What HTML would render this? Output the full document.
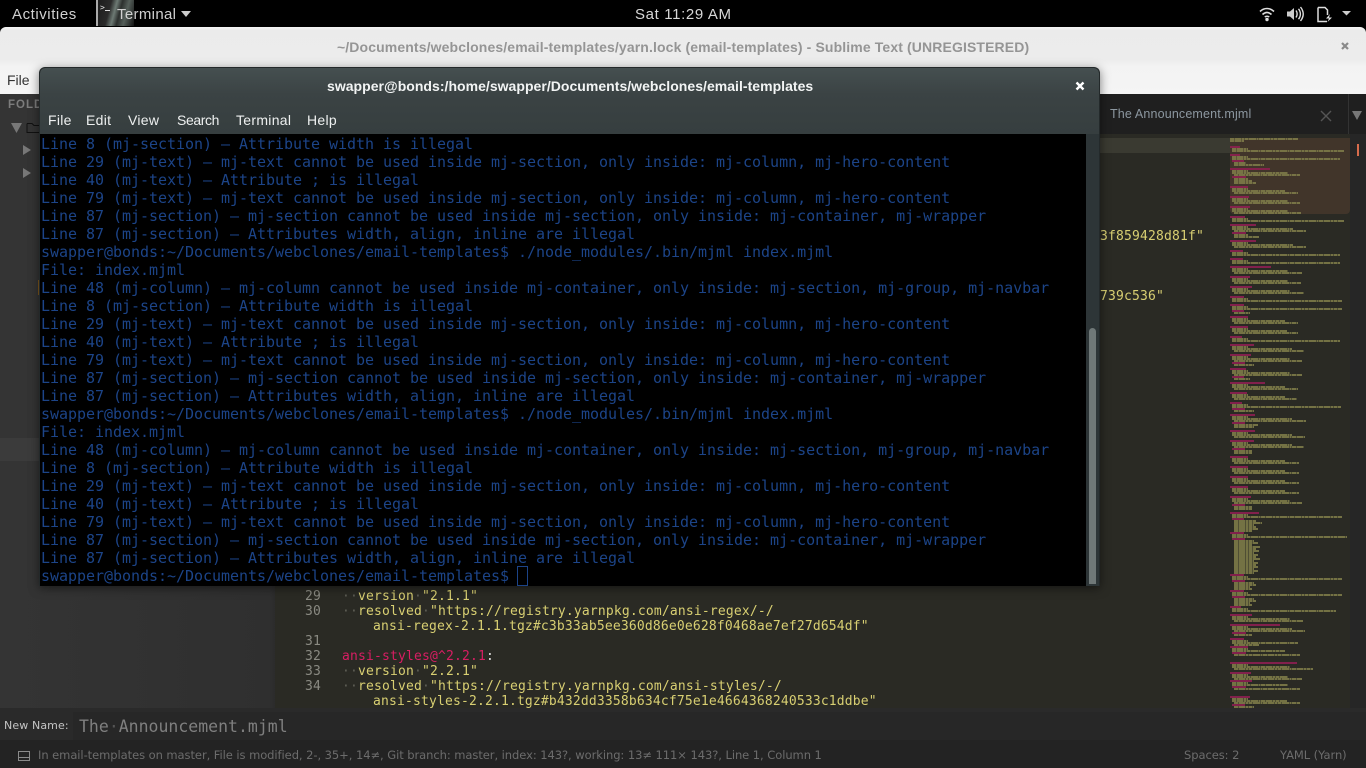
<!DOCTYPE html>
<html><head><meta charset="utf-8"><style>
*{box-sizing:border-box;margin:0;padding:0}
html,body{width:1366px;height:768px;overflow:hidden;background:#000;font-family:"Liberation Sans",sans-serif}
.a{position:absolute;white-space:pre}
.ed{font-family:"DejaVu Sans Mono",monospace;font-size:13px;letter-spacing:.17px;line-height:15px;color:#d8cf72}
.n{color:#8a8a82;width:30px;text-align:right;left:291px}
.d{color:#5f5f56}
.st{font-family:"DejaVu Sans",sans-serif;font-size:11.5px;color:#6c6c6c;letter-spacing:-.06px;line-height:16px}
.m{color:#eef0f0;font-size:14px;letter-spacing:.3px;top:112px;line-height:16px}
pre{font-family:"DejaVu Sans Mono",monospace;font-size:15px;letter-spacing:-.03px;line-height:18px;color:#1c4488}
</style></head><body>
<div class="a" style="left:0;top:0;width:1366px;height:27px;background:#000"></div>
<div class="a" style="left:12px;top:7px;color:#d0d0d0;font-size:15px;letter-spacing:.56px;line-height:16px">Activities</div>
<div class="a" style="left:96px;top:0;width:38px;height:26px;background:linear-gradient(105deg,#1a1a1a 0,#2a2a2a 35%,#6d7a74 48%,#2c302e 60%,#555f5a 75%,#111 100%)"></div>
<div class="a" style="left:96px;top:0;width:2px;height:26px;background:#aaa"></div>
<div class="a" style="left:100px;top:3px;color:#ddd;font:8px 'DejaVu Sans Mono',monospace">&gt;</div>
<div class="a" style="left:105px;top:10px;width:5px;height:1px;background:#ddd"></div>
<div class="a" style="left:117px;top:7px;color:#d0d0d0;font-size:15px;letter-spacing:.33px;line-height:16px">Terminal</div>
<svg class="a" style="left:181px;top:11px" width="10" height="6"><path d="M0 0H10L5 6Z" fill="#ccc"/></svg>
<div class="a" style="left:635px;top:7px;color:#d8d8d8;font-size:15px;letter-spacing:.64px;line-height:16px">Sat 11:29 AM</div>
<svg class="a" style="left:1258px;top:5px" width="96" height="18" fill="none">
<path d="M2 6.5C6 2.5 12 2.5 16 6.5M4.5 9.5C7.5 6.8 10.5 6.8 13.5 9.5M6.8 12C8 11 10 11 11.2 12" stroke="#ddd" stroke-width="1.6"/><circle cx="9" cy="14.5" r="1.7" fill="#ddd"/>
<path d="M29 6.5H32L36 3V15L32 11.5H29Z" fill="#ccc"/><path d="M38 5.5C39.5 7.5 39.5 10.5 38 12.5M40.5 3.8C43 7 43 11 40.5 14.2M42.5 2C46 6.5 46 11.5 42.5 16" stroke="#ddd" stroke-width="1.4"/>
<path d="M60 2.5H67L69.5 5V10M69 16.5H60V2.5" stroke="#ddd" stroke-width="1.5"/><path d="M72 9L68 13.5H71L69.5 17L74 12.5H71Z" fill="#ddd"/>
<path d="M84 6H93L88.5 10.5Z" fill="#ccc"/></svg>

<div class="a" style="left:0;top:27px;width:1366px;height:741px;background:#2a2a24;border-radius:6px 6px 0 0;overflow:hidden">
<div class="a" style="left:0;top:0;width:1366px;height:67px;background:linear-gradient(#f6f6f6 0,#ebebeb 3px,#ececec 33px,#f3f3f3 40px,#f5f5f5 100%)"></div>
</div>
<div class="a" style="left:337px;top:39px;color:#8c8c8c;font-size:14px;letter-spacing:.12px;line-height:16px;font-weight:700;opacity:.9">~/Documents/webclones/email-templates/yarn.lock (email-templates) - Sublime Text (UNREGISTERED)</div>
<svg class="a" style="left:1341px;top:42px" width="8" height="8"><path d="M1 1L7 7M7 1L1 7" stroke="#8a8a8a" stroke-width="2.2"/></svg>
<div class="a" style="left:7px;top:72px;color:#333;font-size:14px;line-height:16px">File</div>

<div class="a" style="left:0;top:94px;width:275px;height:614px;background:linear-gradient(90deg,#343434,#2f2f2f 270px,#2b2b2b)"></div>
<div class="a" style="left:0;top:438px;width:275px;height:23px;background:#3b3b3b"></div>
<div class="a" style="left:8px;top:97px;color:#7c7c7c;font-size:11.5px;font-weight:700;letter-spacing:1px;line-height:16px">FOLDERS</div>
<svg class="a" style="left:8px;top:118px" width="32" height="62"><path d="M3 5H14L8.5 15Z" fill="#777"/><path d="M19 5.500H24L26 7.500H32M19 5.500V14.500H32" stroke="#111" fill="none"/><path d="M15 27L23 32L15 37Z" fill="#777"/><path d="M15 50L23 55L15 60Z" fill="#777"/></svg>
<div class="a" style="left:38px;top:280px;width:1px;height:15px;background:#80581e"></div>

<div class="a" style="left:275px;top:94px;width:1091px;height:40px;background:#1f1f1f"></div>
<div class="a" style="left:1110px;top:106px;color:#8c97a0;font-size:12.500px;letter-spacing:.15px;line-height:16px">The Announcement.mjml</div>
<svg class="a" style="left:1320px;top:110px" width="12" height="12"><path d="M1 1L11 11M11 1L1 11" stroke="#555" stroke-width="1.400"/></svg>
<div class="a" style="left:1348px;top:94px;width:1px;height:44px;background:#333"></div>
<svg class="a" style="left:1352px;top:111px" width="10" height="9"><path d="M0 0H10L5 9Z" fill="#777"/></svg>
<div class="a" style="left:275px;top:134px;width:1091px;height:574px;background:#2a2a24"></div>
<div class="a" style="left:275px;top:138px;width:955px;height:15px;background:#3a3a31"></div>
<div class="a" style="left:1350px;top:134px;width:16px;height:574px;background:#262626"></div>
<div class="a" style="left:1357px;top:144px;width:2px;height:12px;background:#d86c4c"></div>
<div class="a" style="left:1230px;top:138px;width:120px;height:76px;background:#41352a;border-radius:0 0 4px 4px"></div>

<svg class="a" style="left:0;top:0" width="1366" height="768" fill="none">
<path stroke="#7f7c49" stroke-width="1.800" stroke-dasharray="4 .5 7 .5 2 .5" d="M1230 139H1298M1230 141H1244M1232 149h16M1232 151H1344M1232 157h16M1232 159H1340M1234 163h12M1234 165h30M1232 171h16M1232 173H1288M1234 175H1300M1234 179h14M1234 181h18M1234 183h22M1232 189h16M1232 191H1285M1234 193H1298M1232 199h16M1232 201H1288M1234 203H1300M1232 209h16M1232 211H1288M1234 213H1301M1232 219h16M1232 221H1344M1232 227h16M1232 229H1293M1234 231H1306M1234 235h14M1234 237h25M1232 243h16M1232 245H1293M1234 247H1306M1232 253h16M1232 255H1340M1232 261h16M1232 263H1340M1232 269h16M1232 271H1288M1234 273H1302M1232 279h16M1232 281H1288M1234 283H1301M1232 289h16M1232 291H1290M1234 293H1304M1232 299h16M1232 301H1342M1232 307h16M1232 309H1342M1234 313h16M1232 319h16M1232 321H1285M1234 323H1298M1232 329h16M1232 331H1287M1234 333H1298M1232 339h16M1232 341H1340M1232 347h16M1232 349H1292M1234 351H1304M1232 357h16M1232 359H1290M1234 361H1302M1234 365h20M1232 371h16M1232 373H1290M1234 375H1302M1234 379h16M1232 385h16M1232 387H1285M1234 389H1298M1232 395h16M1232 397H1285M1234 399H1297M1232 405h16M1232 407H1341M1234 411h20M1232 417h16M1232 419H1292M1234 421H1306M1234 425h24M1234 427h20M1232 433h16M1232 435H1292M1234 437H1305M1232 443h16M1232 445H1292M1234 447H1304M1234 451h18M1234 453h18M1232 459h16M1232 461H1285M1234 463H1299M1232 469h16M1232 471H1285M1234 473H1299M1232 479h16M1232 481H1285M1234 483H1299M1232 489h16M1232 491H1285M1234 493H1299M1232 499h16M1232 501H1290M1234 503H1302M1234 507h18M1234 509h18M1232 515h16M1232 517H1342M1234 521h22M1234 523h28M1234 525h20M1234 527h22M1234 529h24M1234 531h18M1232 535h16M1232 537H1347M1234 541h20M1234 543h24M1234 545h18M1234 547h26M1234 549h22M1234 551h25M1234 553h20M1234 555h24M1234 557h22M1234 559h26M1234 561h20M1234 563h24M1234 565h22M1234 567h24M1234 569h20M1234 571h24M1234 573h20M1232 577h16M1232 579H1342M1234 583h20M1234 585h22M1234 587h16M1234 589h18M1232 593h16M1232 595H1342M1234 599h20M1234 601h22M1234 603h16M1234 605h18M1232 609h16M1232 611H1336M1232 617h16M1232 619H1290M1234 621H1303M1232 627h16M1232 629H1292M1234 631H1305M1234 635h18M1232 641h16M1232 643H1298M1234 645H1259M1232 649h16M1232 651H1285M1234 655H1300M1232 665h16M1232 667H1290M1234 669H1313M1232 675h16M1232 677H1288M1234 679H1302M1232 683h16M1232 685H1288M1234 689H1300M1232 699h16M1232 701H1287M1234 703H1300M1234 707h20"/>
<path stroke="#8f1f52" stroke-width="1.800" d="M1230 147h10M1230 155h10M1232 161h12M1230 169h40M1232 177h14M1230 187h18M1230 197h19M1230 207h20M1230 217h15M1230 225h26M1232 233h14M1230 241h26M1230 251h13M1230 259h13M1230 267h41M1230 277h20M1230 287h22M1230 297h14M1230 305h14M1232 311h12M1230 317h18M1230 327h18M1230 337h12M1230 345h24M1230 355h21M1232 363h13M1230 369h16M1232 377h12M1230 383h35M1230 393h17M1230 403h12M1232 409h13M1230 415h25M1232 423h13M1230 431h25M1230 441h24M1232 449h13M1230 457h18M1230 467h18M1230 477h18M1230 487h18M1230 497h21M1232 505h13M1230 513h29M1232 519h12M1230 533h14M1232 539h13M1230 575h14M1232 581h13M1230 591h14M1232 597h13M1230 607h11M1230 615h22M1230 625h50M1232 633h14M1230 639h14M1230 647h18M1232 653h14M1230 663h67M1230 673h21M1230 681h22M1232 687h14M1230 697h20M1232 705h13"/>
</svg>

<div class="a ed" style="left:1060px;width:144px;top:229px;text-align:right">b3f859428d81f"</div>
<div class="a ed" style="left:1060px;width:104px;top:289px;text-align:right">5739c536"</div>
<div class="a ed n" style="top:589px">29</div>
<div class="a ed n" style="top:604px">30</div>
<div class="a ed n" style="top:634px">31</div>
<div class="a ed n" style="top:649px">32</div>
<div class="a ed n" style="top:664px">33</div>
<div class="a ed n" style="top:679px">34</div>
<div class="a ed" style="left:342px;top:589px"><span class="d">··</span>version<span class="d">·</span>"2.1.1"</div>
<div class="a ed" style="left:342px;top:604px"><span class="d">··</span>resolved<span class="d">·</span>"https://registry.yarnpkg.com/ansi-regex/-/</div>
<div class="a ed" style="left:373px;top:619px">ansi-regex-2.1.1.tgz#c3b33ab5ee360d86e0e628f0468ae7ef27d654df"</div>
<div class="a ed" style="left:342px;top:649px"><span style="color:#d81e63">ansi-styles@^2.2.1</span><span style="color:#ddd">:</span></div>
<div class="a ed" style="left:342px;top:664px"><span class="d">··</span>version<span class="d">·</span>"2.2.1"</div>
<div class="a ed" style="left:342px;top:679px"><span class="d">··</span>resolved<span class="d">·</span>"https://registry.yarnpkg.com/ansi-styles/-/</div>
<div class="a ed" style="left:373px;top:694px">ansi-styles-2.2.1.tgz#b432dd3358b634cf75e1e4664368240533c1ddbe"</div>

<div class="a" style="left:0;top:708px;width:1366px;height:32px;background:#2a2a2a"></div>
<div class="a" style="left:73px;top:712px;width:1293px;height:28px;background:#272727"></div>
<div class="a" style="left:4px;top:718px;color:#c4c4c4;font-family:'DejaVu Sans',sans-serif;font-size:11px;letter-spacing:.12px;line-height:16px">New Name:</div>
<div class="a" style="left:79px;top:717px;color:#7f7f7f;font-family:'DejaVu Sans Mono',monospace;font-size:16.500px;line-height:20px">The<span style="color:#555">·</span>Announcement.mjml</div>
<div class="a" style="left:0;top:740px;width:1366px;height:28px;background:#232323"></div>
<svg class="a" style="left:18px;top:751px" width="12" height="10" fill="none"><path d="M.5.5H11.500V9.500H.5ZM.5 6.500H11.500" stroke="#8a8a8a"/></svg>
<div class="a st" style="left:38px;top:747px">In email-templates on master, File is modified, 2-, 35+, 14≠, Git branch: master, index: 143?, working: 13≠ 111× 143?, Line 1, Column 1</div>
<div class="a st" style="left:1184px;top:747px">Spaces: 2</div>
<div class="a st" style="left:1280px;top:747px">YAML (Yarn)</div>

<div class="a" style="left:39px;top:67px;width:1061px;height:519px;background:#000;border:1px solid #23292a;border-bottom:0;border-radius:6px 6px 0 0;box-shadow:0 2px 10px rgba(0,0,0,.5);overflow:hidden">
<div class="a" style="left:0;top:0;width:1061px;height:66px;background:linear-gradient(#454f50,#3b4344 40%,#363e3f)"></div>
<div class="a" style="left:1046px;top:66px;width:15px;height:453px;background:#2d3537"></div>
<div class="a" style="left:1049px;top:260px;width:7px;height:256px;background:#6f7878;border-radius:4px 4px 0 0"></div>
</div>
<div class="a" style="left:327px;top:78px;color:#f2f4f4;font-size:14px;font-weight:700;letter-spacing:.03px;line-height:16px">swapper@bonds:/home/swapper/Documents/webclones/email-templates</div>
<svg class="a" style="left:1075px;top:81px" width="10" height="10"><path d="M1.500 1.500L8.500 8.500M8.500 1.500L1.500 8.500" stroke="#fff" stroke-width="2.400"/></svg>
<div class="a m" style="left:48px">File</div><div class="a m" style="left:86px">Edit</div><div class="a m" style="left:128px">View</div><div class="a m" style="left:177px;letter-spacing:-.4px">Search</div><div class="a m" style="left:236px">Terminal</div><div class="a m" style="left:307px">Help</div>
<pre class="a" style="left:41px;top:135px">Line 8 (mj-section) — Attribute width is illegal
Line 29 (mj-text) — mj-text cannot be used inside mj-section, only inside: mj-column, mj-hero-content
Line 40 (mj-text) — Attribute ; is illegal
Line 79 (mj-text) — mj-text cannot be used inside mj-section, only inside: mj-column, mj-hero-content
Line 87 (mj-section) — mj-section cannot be used inside mj-section, only inside: mj-container, mj-wrapper
Line 87 (mj-section) — Attributes width, align, inline are illegal
swapper@bonds:~/Documents/webclones/email-templates$ ./node_modules/.bin/mjml index.mjml
File: index.mjml
Line 48 (mj-column) — mj-column cannot be used inside mj-container, only inside: mj-section, mj-group, mj-navbar
Line 8 (mj-section) — Attribute width is illegal
Line 29 (mj-text) — mj-text cannot be used inside mj-section, only inside: mj-column, mj-hero-content
Line 40 (mj-text) — Attribute ; is illegal
Line 79 (mj-text) — mj-text cannot be used inside mj-section, only inside: mj-column, mj-hero-content
Line 87 (mj-section) — mj-section cannot be used inside mj-section, only inside: mj-container, mj-wrapper
Line 87 (mj-section) — Attributes width, align, inline are illegal
swapper@bonds:~/Documents/webclones/email-templates$ ./node_modules/.bin/mjml index.mjml
File: index.mjml
Line 48 (mj-column) — mj-column cannot be used inside mj-container, only inside: mj-section, mj-group, mj-navbar
Line 8 (mj-section) — Attribute width is illegal
Line 29 (mj-text) — mj-text cannot be used inside mj-section, only inside: mj-column, mj-hero-content
Line 40 (mj-text) — Attribute ; is illegal
Line 79 (mj-text) — mj-text cannot be used inside mj-section, only inside: mj-column, mj-hero-content
Line 87 (mj-section) — mj-section cannot be used inside mj-section, only inside: mj-container, mj-wrapper
Line 87 (mj-section) — Attributes width, align, inline are illegal
swapper@bonds:~/Documents/webclones/email-templates$</pre>
<div class="a" style="left:517px;top:566px;width:11px;height:20px;border:1px solid #1c4488"></div>
</body></html>
